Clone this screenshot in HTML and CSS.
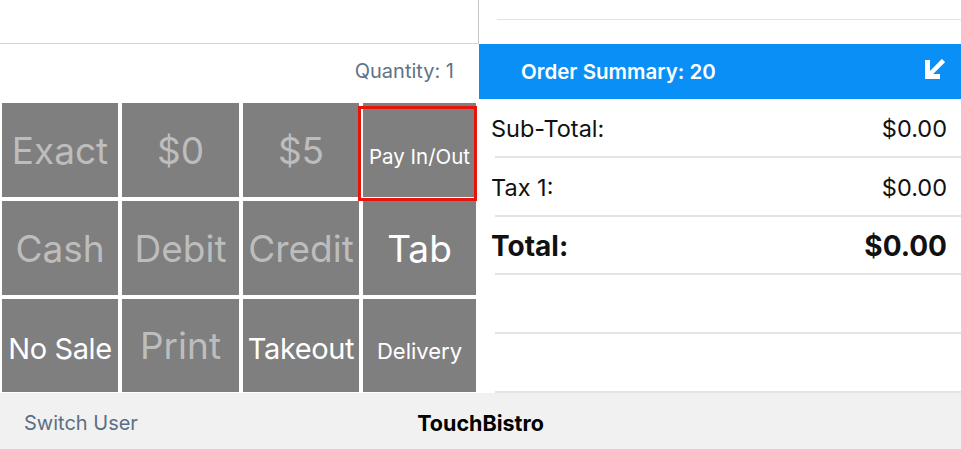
FILE: index.html
```html
<!doctype html>
<html lang="en">
  <head>
    <meta charset="utf-8">
    <title>TouchBistro - Payment</title>
    <link rel="stylesheet" href="styles.css">
  </head>
  <body>
    <div class="main">
      <div class="left">
        <div class="left-top"></div>
        <div class="qty">Quantity: 1</div>
        <div class="pad">
          <div class="key big off">Exact</div>
          <div class="key big off">$0</div>
          <div class="key big off">$5</div>
          <div class="key small selected">Pay In/Out</div>
          <div class="key big off">Cash</div>
          <div class="key big off">Debit</div>
          <div class="key big off">Credit</div>
          <div class="key big">Tab</div>
          <div class="key mid">No Sale</div>
          <div class="key big off">Print</div>
          <div class="key mid">Takeout</div>
          <div class="key small wide">Delivery</div>
        </div>
      </div>
      <div class="right">
        <div class="right-top"><div class="prev-row"></div></div>
        <div class="summary-head">
          <span>Order Summary: 20</span>
          <svg class="collapse" width="20" height="20" viewBox="0 0 20 20">
            <path d="M2.5 1 V17.5 H15" fill="none" stroke="#fff" stroke-width="5"/>
            <path d="M4 16 L18.5 1.5" fill="none" stroke="#fff" stroke-width="4.5"/>
          </svg>
        </div>
        <div class="totals">
          <div class="line"><span>Sub-Total:</span><span>$0.00</span></div>
          <div class="line"><span>Tax 1:</span><span>$0.00</span></div>
          <div class="line grand"><span>Total:</span><span>$0.00</span></div>
          <div class="line"></div>
          <div class="line"></div>
        </div>
      </div>
    </div>
    <div class="footer">
      <span class="switch">Switch User</span>
      <span class="brand">TouchBistro</span>
    </div>
  </body>
</html>
```

FILE: styles.css
```css
body {
    margin: 0;
    padding: 0;
    width: 961px;
    height: 449px;
    overflow: hidden;
    font-family: Inter, "Liberation Sans", sans-serif;
    background-color: #fff;
}

.main {
    display: flex;
    height: 393px;
}

.left {
    width: 479px;
    display: flex;
    flex-direction: column;
}

.left-top {
    height: 43px;
    border-bottom: 1px solid #d6d6d6;
    border-right: 1px solid #c4c4c4;
}

.qty {
    height: 54px;
    display: flex;
    align-items: center;
    justify-content: flex-end;
    padding-right: 25px;
    font-size: 20px;
    color: #5f7387;
}

.pad {
    display: grid;
    grid-template-columns: 116px 117px 116px 113px;
    grid-template-rows: 94px 94px 93px;
    gap: 4px;
    padding: 5px 0 0 2px;
}

.key {
    position: relative;
    background-color: #7f7f7f;
    color: #fff;
    display: flex;
    align-items: center;
    justify-content: center;
    white-space: nowrap;
}

.key.big {
    font-size: 37px;
}

.key.mid {
    font-size: 29px;
    padding-top: 6px;
    letter-spacing: -0.4px;
}

.key.small {
    font-size: 20.5px;
    padding-top: 12px;
}

.key.wide {
    font-size: 22px;
    padding-top: 10px;
}

.key.off {
    color: #bdbdbd;
}

.key.selected::after {
    content: "";
    position: absolute;
    left: -5px;
    right: -1px;
    top: 3px;
    bottom: -4px;
    border: 3px solid #e8130d;
}

.right {
    flex: 1;
    display: flex;
    flex-direction: column;
}

.right-top {
    height: 44px;
}

.prev-row {
    height: 19px;
    margin-left: 18px;
    border-bottom: 1px solid #e2e2e2;
}

.summary-head {
    height: 55px;
    background-color: #0a8ff6;
    color: #fff;
    display: flex;
    align-items: center;
    justify-content: space-between;
    padding: 0 16px 0 42px;
    font-size: 20.5px;
    font-weight: 600;
}

.collapse {
    margin-top: -5px;
}

.totals {
    flex: 1;
    display: flex;
    flex-direction: column;
}

.line {
    flex: 1;
    display: flex;
    align-items: center;
    justify-content: space-between;
    padding: 0 14px 0 12px;
    font-size: 23.5px;
    color: #111;
    background: linear-gradient(#e4e4e4, #e4e4e4) 16px 100% / calc(100% - 16px) 2px no-repeat;
}

.line.grand {
    font-size: 28px;
    font-weight: 700;
}

.footer {
    height: 56px;
    box-sizing: border-box;
    padding: 3px 0 0 24px;
    background-color: #f1f1f1;
    display: flex;
    align-items: center;
    position: relative;
    font-size: 20px;
}

.switch {
    color: #5b6f83;
}

.brand {
    position: absolute;
    left: 0;
    right: 0;
    text-align: center;
    font-size: 21.5px;
    font-weight: 700;
    color: #000;
}
```
